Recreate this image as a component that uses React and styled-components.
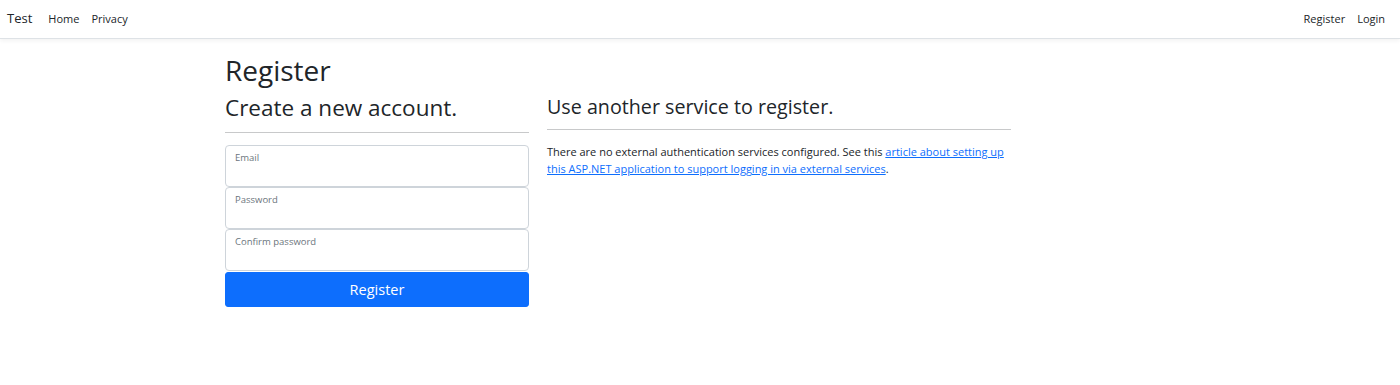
import React from 'react';
import styled, { createGlobalStyle } from 'styled-components';

const GlobalStyle = createGlobalStyle`
  body {
    margin: 0;
    background: #fff;
    color: #212529;
    font-family: "Open Sans", "Noto Sans", sans-serif;
    font-size: 11.5px;
    line-height: 1.5;
  }
  * { box-sizing: border-box; }
`;

const Navbar = styled.nav`
  height: 39px;
  display: flex;
  align-items: center;
  justify-content: space-between;
  padding: 0 15px 0 7px;
  border-bottom: 1px solid #dee2e6;
  box-shadow: 0 2px 4px rgba(0, 0, 0, 0.05);
`;

const NavGroup = styled.div`
  display: flex;
  align-items: center;
  gap: ${(p) => p.$gap || 12}px;
`;

const Brand = styled.a`
  font-size: 13px;
  color: #212529;
  text-decoration: none;
  margin-right: 4px;
`;

const NavLink = styled.a`
  font-size: 11px;
  color: #212529;
  text-decoration: none;
`;

const Container = styled.main`
  width: 960px;
  margin: 0 0 0 217px;
  padding: 15px 0 0;
`;

const PageTitle = styled.h1`
  margin: 0 0 0 8px;
  font-size: 28px;
  font-weight: 500;
  line-height: 1.2;
`;

const Row = styled.div`
  display: grid;
  grid-template-columns: 320px 482px;
`;

const Col = styled.div`
  padding: 0 8px 0 ${(p) => p.$left || 8}px;
`;

const SectionTitle = styled.h2`
  margin: ${(p) => p.$top || 0}px 0 0;
  font-size: ${(p) => p.$size}px;
  font-weight: 500;
  line-height: 1.2;
`;

const Rule = styled.hr`
  border: 0;
  border-top: 1px solid #c8c9ca;
  margin: ${(p) => p.$top}px 0 ${(p) => p.$bottom}px;
`;

const Field = styled.div`
  height: 42px;
  border: 1px solid #ced4da;
  border-radius: 4px;
  padding: 6px 9px;
`;

const FieldLabel = styled.label`
  display: block;
  font-size: 9.5px;
  color: #6c757d;
  line-height: 1.3;
`;

const SubmitButton = styled.button`
  display: block;
  width: 100%;
  height: 35px;
  margin-top: 1px;
  background: #0d6efd;
  color: #fff;
  border: 1px solid #0d6efd;
  border-radius: 3px;
  font-family: inherit;
  font-size: 14.5px;
`;

const Text = styled.p`
  margin: 0;
  font-size: 11px;
  line-height: 17px;
`;

const Link = styled.a`
  color: #0d6efd;
  text-decoration: underline;
`;

export default function App() {
  return (
    <>
      <GlobalStyle />
      <Navbar>
        <NavGroup $gap={12}>
          <Brand href="#">Test</Brand>
          <NavLink href="#">Home</NavLink>
          <NavLink href="#">Privacy</NavLink>
        </NavGroup>
        <NavGroup $gap={12}>
          <NavLink href="#">Register</NavLink>
          <NavLink href="#">Login</NavLink>
        </NavGroup>
      </Navbar>
      <Container>
        <PageTitle>Register</PageTitle>
        <Row>
          <Col>
            <SectionTitle $size={22.5} $top={6}>Create a new account.</SectionTitle>
            <Rule $top={11} $bottom={12} />
            <Field><FieldLabel>Email</FieldLabel></Field>
            <Field><FieldLabel>Password</FieldLabel></Field>
            <Field><FieldLabel>Confirm password</FieldLabel></Field>
            <SubmitButton>Register</SubmitButton>
          </Col>
          <Col $left={10}>
            <SectionTitle $size={19.7} $top={7}>Use another service to register.</SectionTitle>
            <Rule $top={11} $bottom={13} />
            <Text>
              There are no external authentication services configured. See this{' '}
              <Link href="#">article about setting up this ASP.NET application to support logging in via external services</Link>.
            </Text>
          </Col>
        </Row>
      </Container>
    </>
  );
}
